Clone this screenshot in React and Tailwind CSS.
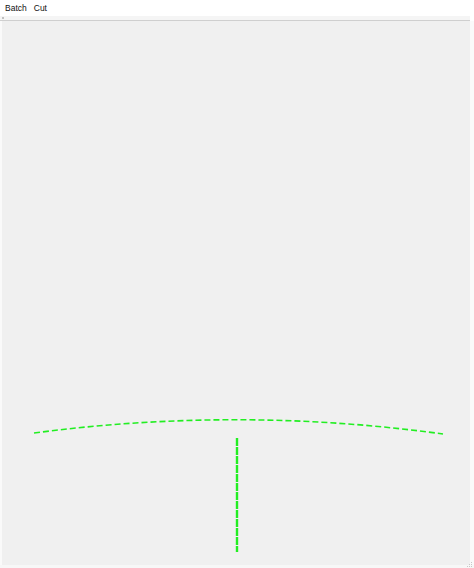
import React from 'react'

export default function App() {
  return (
    <div className="w-[474px] h-[568px] flex flex-col bg-white text-[8.5px] text-[#111]" style={{ fontFamily: '"Liberation Sans", "DejaVu Sans", sans-serif' }}>
      <div className="h-[16px] flex items-center gap-[7px] px-[5px] bg-white">
        <span className="leading-none">Batch</span>
        <span className="leading-none">Cut</span>
      </div>
      <div className="h-[5px] bg-[#f5f5f5] border-b border-[#cfcfcf] relative mr-[4px]">
        <div className="absolute left-[2px] top-[1px] w-[2px] h-[2px] bg-[#c0c0c0]" />
      </div>
      <div className="flex-1 flex pl-[2px] pr-[4px] bg-[#fafafa]">
        <div className="flex-1 bg-[#f0f0f0] relative">
          <svg className="absolute inset-0" width="468" height="545" viewBox="0 0 468 545">
            <path d="M32 412 Q237 385 441 413" fill="none" stroke="#22ee22" strokeWidth="1.6" strokeDasharray="6 3" />
            <line x1="235" y1="417" x2="235" y2="531" stroke="#22ee22" strokeWidth="2.4" strokeDasharray="8 1" />
          </svg>
        </div>
      </div>
      <div className="h-[3px] bg-[#f7f7f7] relative">
        <svg className="absolute right-[1px] bottom-0" width="7" height="7" viewBox="0 0 7 7">
          <rect x="5" y="1" width="1" height="1" fill="#c8c8c8" />
          <rect x="3" y="3" width="1" height="1" fill="#c8c8c8" />
          <rect x="5" y="3" width="1" height="1" fill="#c8c8c8" />
          <rect x="1" y="5" width="1" height="1" fill="#c8c8c8" />
          <rect x="3" y="5" width="1" height="1" fill="#c8c8c8" />
          <rect x="5" y="5" width="1" height="1" fill="#c8c8c8" />
        </svg>
      </div>
    </div>
  )
}
